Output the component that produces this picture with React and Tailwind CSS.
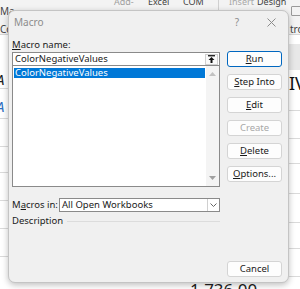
import React from "react";

const font = { fontFamily: '"Noto Sans", "Open Sans", sans-serif' };

function Btn({ children, primary, disabled }) {
  return (
    <div
      className={
        "h-[16px] w-[55px] flex items-center justify-center rounded-[3px] bg-[#fdfdfd] text-[9.5px] leading-none border whitespace-nowrap " +
        (primary ? "border-[#0067c0]" : "border-[#d4d4d4]") +
        (disabled ? " text-[#a8a8a8]" : " text-[#1a1a1a]")
      }
    >
      {children}
    </div>
  );
}

export default function App() {
  return (
    <div className="relative w-[300px] h-[289px] overflow-hidden bg-white" style={font}>
      {/* Excel background */}
      <div className="absolute left-0 top-0 w-[300px] h-[35px] bg-[#f3f3f3] border-b border-[#d6d6d6]" />
      <div className="absolute left-[114px] top-[-4px] text-[9px] leading-[11px] text-[#a0a0a0] whitespace-nowrap">Add-</div>
      <div className="absolute left-[148px] top-[-4px] text-[9px] leading-[11px] text-[#444] whitespace-nowrap">Excel</div>
      <div className="absolute left-[183px] top-[-4px] text-[9px] leading-[11px] text-[#444] whitespace-nowrap">COM</div>
      <div className="absolute left-[218px] top-0 w-px h-[10px] bg-[#d0d0d0]" />
      <div className="absolute left-[229px] top-[-4px] text-[9px] leading-[11px] text-[#a8a8a8] whitespace-nowrap">Insert</div>
      <div className="absolute left-[257px] top-[-4px] text-[9px] leading-[11px] text-[#444] whitespace-nowrap">Design</div>
      <div className="absolute left-[0px] top-[5px] text-[10px] leading-[12px] text-[#444]">Ma</div>
      <div className="absolute left-[0px] top-[23px] text-[10px] leading-[12px] text-[#444]">Co</div>
      <div className="absolute left-[290px] top-[23px] text-[10px] leading-[12px] text-[#444]">tro</div>
      <div className="absolute left-[291px] top-[6px] w-[11px] h-[10px] border border-[#9a9a9a] rounded-[1px]" />
      <div className="absolute left-[289px] top-[44px] w-[11px] h-[26px] bg-[#e8e8e8]" />
      <div className="absolute left-[289px] top-[73px] text-[18px] leading-[20px] text-[#111]">IV</div>
      <div className="absolute left-[-4px] top-[70px] text-[15px] leading-[18px] text-[#222] italic">A</div>
      <div className="absolute left-[-4px] top-[97px] text-[15px] leading-[18px] text-[#2f6fbf] italic">A</div>
      {[110, 138, 163, 193, 222, 248, 276].map((y) => (
        <div key={"r" + y} className="absolute left-[289px] w-[11px] h-px bg-[#dadada]" style={{ top: y }} />
      ))}
      {[88, 118, 146, 172, 200, 228, 256].map((y) => (
        <div key={"l" + y} className="absolute left-0 w-[8px] h-px bg-[#dadada]" style={{ top: y }} />
      ))}
      <div className="absolute left-[190px] top-[280px] text-[17px] leading-[20px] text-[#222] whitespace-nowrap">1 736 00</div>

      {/* Dialog */}
      <div className="absolute left-[8px] top-[10px] w-[281px] h-[273px] bg-[#f0f0f0] border border-[#c4c4c4] rounded-[7px] shadow-[0_2px_6px_rgba(0,0,0,0.25)] flex flex-col">
        <div className="h-[22px] flex items-center text-[10px] text-[#8c8c8c]">
          <span className="pl-[5px]">Macro</span>
          <span className="ml-auto mr-[28px]">?</span>
          <svg width="9" height="9" viewBox="0 0 9 9" className="mr-[12px]">
            <path d="M0.5 0.5 L8.5 8.5 M8.5 0.5 L0.5 8.5" stroke="#8c8c8c" strokeWidth="1" />
          </svg>
        </div>
        <div className="flex-1 flex pl-[3px] pr-[6px] gap-[7px] pt-[5px] pb-[5px]">
          {/* left column */}
          <div className="w-[208px] flex flex-col">
            <div className="h-[13px] text-[9.5px] leading-[13px] text-[#1a1a1a] whitespace-nowrap">
              <span className="underline">M</span>acro name:
            </div>
            <div className="mt-[1px] h-[14px] bg-white border border-[#8a8a8a] flex items-center">
              <span className="pl-[2px] text-[9.5px] leading-none text-[#1a1a1a] whitespace-nowrap">ColorNegativeValues</span>
              <div className="ml-auto mr-px h-[11px] w-[13px] border border-[#d0d0d0] bg-[#fafafa] flex items-center justify-center">
                <svg width="7" height="8" viewBox="0 0 7 8">
                  <path d="M0 0.75 H7" stroke="#111" strokeWidth="1.3" />
                  <path d="M3.5 2 L0.5 5 H2.5 V8 H4.5 V5 H6.5 Z" fill="#111" />
                </svg>
              </div>
            </div>
            <div className="h-[121px] bg-white border border-t-0 border-[#8a8a8a] flex">
              <div className="flex-1 pt-[2px] pl-px">
                <div className="h-[10px] w-[191px] bg-[#0078d7] text-white text-[9.5px] leading-[10px] pl-px whitespace-nowrap">
                  ColorNegativeValues
                </div>
              </div>
              <div className="w-[13px] bg-[#f4f4f4] flex flex-col items-center justify-between py-[6px]">
                <svg width="7" height="4" viewBox="0 0 7 4"><path d="M3.5 0 L7 4 H0 Z" fill="#c2c2c2" /></svg>
                <svg width="7" height="4" viewBox="0 0 7 4"><path d="M0 0 H7 L3.5 4 Z" fill="#a0a0a0" /></svg>
              </div>
            </div>
            <div className="mt-[11px] flex items-center h-[14px]">
              <div className="w-[47px] text-[9.5px] leading-none text-[#1a1a1a] whitespace-nowrap">
                M<span className="underline">a</span>cros in:
              </div>
              <div className="flex-1 h-[14px] bg-white border border-[#8a8a8a] flex items-center">
                <span className="pl-[2px] text-[9.5px] leading-none text-[#1a1a1a] whitespace-nowrap">All Open Workbooks</span>
                <div className="ml-auto h-full w-[12px] border-l border-[#d0d0d0] flex items-center justify-center">
                  <svg width="7" height="4" viewBox="0 0 7 4">
                    <path d="M0.5 0.5 L3.5 3.5 L6.5 0.5" stroke="#666" fill="none" strokeWidth="1" />
                  </svg>
                </div>
              </div>
            </div>
            <div className="mt-[2px] flex items-center h-[14px]">
              <span className="text-[9.5px] leading-none text-[#1a1a1a] whitespace-nowrap">Description</span>
              <div className="flex-1 ml-[4px] h-px bg-[#dcdcdc]" />
            </div>
          </div>
          {/* right column */}
          <div className="w-[55px] flex flex-col gap-[7px] pt-[13px]">
            <Btn primary>
              <span className="underline">R</span>un
            </Btn>
            <Btn>
              <span className="underline">S</span>tep Into
            </Btn>
            <Btn>
              <span className="underline">E</span>dit
            </Btn>
            <Btn disabled>Create</Btn>
            <Btn>
              <span className="underline">D</span>elete
            </Btn>
            <Btn>
              <span className="underline">O</span>ptions...
            </Btn>
            <div className="mt-auto">
              <Btn>Cancel</Btn>
            </div>
          </div>
        </div>
      </div>
    </div>
  );
}
